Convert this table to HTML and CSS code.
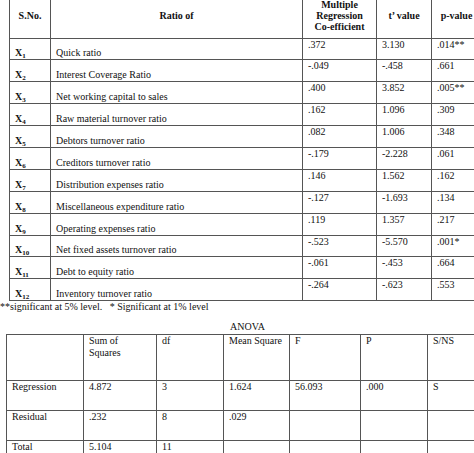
FILE: index.html
```html
<!DOCTYPE html>
<html>
<head>
<meta charset="utf-8">
<link rel="stylesheet" href="styles.css">
</head>
<body>
<div class="page">
  <table class="reg">
    <colgroup>
      <col class="c-sno"><col class="c-ratio"><col class="c-coef"><col class="c-t"><col class="c-p">
    </colgroup>
    <thead>
      <tr class="head">
        <th>S.No.</th>
        <th>Ratio of</th>
        <th>Multiple<br>Regression<br>Co-efficient</th>
        <th>t’ value</th>
        <th>p-value</th>
      </tr>
    </thead>
    <tbody>
      <tr><td class="lab"><b>X<sub>1</sub></b></td><td class="name">Quick ratio</td><td class="val">.372</td><td class="val">3.130</td><td class="val">.014**</td></tr>
      <tr><td class="lab"><b>X<sub>2</sub></b></td><td class="name">Interest Coverage Ratio</td><td class="val">-.049</td><td class="val">-.458</td><td class="val">.661</td></tr>
      <tr><td class="lab"><b>X<sub>3</sub></b></td><td class="name">Net working capital to sales</td><td class="val">.400</td><td class="val">3.852</td><td class="val">.005**</td></tr>
      <tr><td class="lab"><b>X<sub>4</sub></b></td><td class="name">Raw material turnover ratio</td><td class="val">.162</td><td class="val">1.096</td><td class="val">.309</td></tr>
      <tr><td class="lab"><b>X<sub>5</sub></b></td><td class="name">Debtors turnover ratio</td><td class="val">.082</td><td class="val">1.006</td><td class="val">.348</td></tr>
      <tr><td class="lab"><b>X<sub>6</sub></b></td><td class="name">Creditors turnover ratio</td><td class="val">-.179</td><td class="val">-2.228</td><td class="val">.061</td></tr>
      <tr><td class="lab"><b>X<sub>7</sub></b></td><td class="name">Distribution expenses ratio</td><td class="val">.146</td><td class="val">1.562</td><td class="val">.162</td></tr>
      <tr><td class="lab"><b>X<sub>8</sub></b></td><td class="name">Miscellaneous expenditure ratio</td><td class="val">-.127</td><td class="val">-1.693</td><td class="val">.134</td></tr>
      <tr><td class="lab"><b>X<sub>9</sub></b></td><td class="name">Operating expenses ratio</td><td class="val">.119</td><td class="val">1.357</td><td class="val">.217</td></tr>
      <tr><td class="lab"><b>X<sub>10</sub></b></td><td class="name">Net fixed assets turnover ratio</td><td class="val">-.523</td><td class="val">-5.570</td><td class="val">.001*</td></tr>
      <tr><td class="lab"><b>X<sub>11</sub></b></td><td class="name">Debt to equity ratio</td><td class="val">-.061</td><td class="val">-.453</td><td class="val">.664</td></tr>
      <tr><td class="lab"><b>X<sub>12</sub></b></td><td class="name">Inventory turnover ratio</td><td class="val">-.264</td><td class="val">-.623</td><td class="val">.553</td></tr>
    </tbody>
  </table>
  <p class="note">**significant at 5% level.   * Significant at 1% level</p>

  <table class="anova">
    <caption>ANOVA</caption>
    <colgroup>
      <col class="a1"><col class="a2"><col class="a3"><col class="a4"><col class="a5"><col class="a6"><col class="a7">
    </colgroup>
    <tr class="ahead"><td></td><td>Sum of<br>Squares</td><td>df</td><td>Mean Square</td><td>F</td><td>P</td><td>S/NS</td></tr>
    <tr class="arow"><td>Regression</td><td>4.872</td><td>3</td><td>1.624</td><td>56.093</td><td>.000</td><td>S</td></tr>
    <tr class="arow"><td>Residual</td><td>.232</td><td>8</td><td>.029</td><td></td><td></td><td></td></tr>
    <tr class="arow"><td>Total</td><td>5.104</td><td>11</td><td></td><td></td><td></td><td></td></tr>
  </table>
</div>
</body>
</html>
```

FILE: styles.css
```css
html, body {
  margin: 0;
  padding: 0;
  background: #fff;
  overflow: hidden;
}

body {
  font-family: "Liberation Serif", "Times New Roman", serif;
  font-size: 10px;
  color: #111;
  width: 474px;
  height: 453px;
}

.page {
  display: flex;
  flex-direction: column;
  align-items: flex-start;
}

/* ---------- regression table ---------- */
.reg {
  border-collapse: collapse;
  table-layout: fixed;
  width: 472px;
  margin: -8px 0 0 9px;
}

.c-sno { width: 41px; }
.c-ratio { width: 252px; }
.c-coef { width: 74px; }
.c-t { width: 55px; }
.c-p { width: 50px; }

.reg th,
.reg td {
  border: 1px solid #555;
  padding: 0 5px;
  line-height: 12px;
}

.reg th {
  font-weight: bold;
  text-align: center;
  vertical-align: middle;
  line-height: 11px;
  padding: 0 2px;
}

.head { height: 45.5px; }

.reg tbody tr { height: 21.9px; }

.lab,
.name {
  vertical-align: bottom;
  padding-bottom: 1px;
}

.lab sub {
  font-size: 7px;
  vertical-align: -2px;
  line-height: 0;
}

.val {
  vertical-align: top;
  padding-top: 1px;
}

.note {
  margin: 0;
  line-height: 12px;
  white-space: pre;
}

/* ---------- ANOVA table ---------- */
.anova {
  border-collapse: collapse;
  table-layout: fixed;
  width: 482px;
  margin: 8px 0 0 6px;
}

.anova caption {
  line-height: 12px;
  padding-bottom: 1px;
  text-align: center;
}

.a1 { width: 77px; }
.a2 { width: 73px; }
.a3 { width: 67px; }
.a4 { width: 66px; }
.a5 { width: 71px; }
.a6 { width: 67px; }
.a7 { width: 61px; }

.anova td {
  border: 1px solid #555;
  padding: 0 5px;
  line-height: 11.5px;
  vertical-align: top;
}

.ahead { height: 46px; }
.arow { height: 30px; }
```
